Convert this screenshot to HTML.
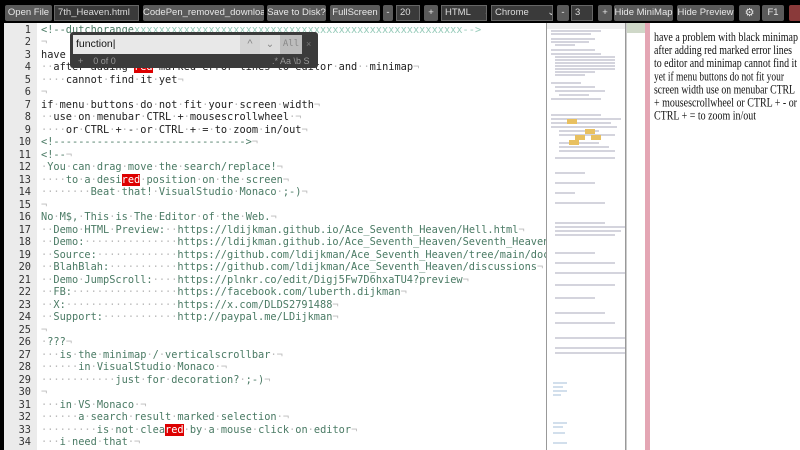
<!DOCTYPE html>
<html><head><meta charset="utf-8"><style>
*{margin:0;padding:0;box-sizing:border-box}
body{width:800px;height:450px;overflow:hidden;background:#000;font-family:"Liberation Sans",sans-serif;position:relative}
.bar{position:absolute;left:0;top:0;width:800px;height:23px;background:#000}
.b{position:absolute;top:5px;height:16px;background:#5a5a5a;color:#e8e8e8;font-size:9.5px;line-height:16px;text-align:center;border-radius:2px;white-space:nowrap;overflow:hidden}
.in{position:absolute;top:5px;height:16px;background:#3a3a3a;border:1px solid #666;color:#ddd;font-size:9.5px;line-height:14px;padding-left:3px;white-space:nowrap;overflow:hidden}
.gut{position:absolute;left:4px;top:23px;width:33px;height:427px;background:#ebebeb}
.ed{position:absolute;left:37px;top:23px;width:509px;height:427px;background:#fff;overflow:hidden}
pre{position:absolute;font-family:"DejaVu Sans Mono",monospace;font-size:10.3px;line-height:12.48px;white-space:pre}
.nums{left:4px;top:24px;width:27px;text-align:right;color:#333}
.code{left:41px;top:24px;color:#4b7b65;width:505px;overflow:hidden}
.k{color:#222}.d{color:#bbb}.r{background:#d00;color:#fff}
.mm{position:absolute;left:546px;top:23px;width:80px;height:427px;background:#fff;border-left:1px solid #999;border-right:1px solid #999}
.sb{position:absolute;left:626px;top:23px;width:19px;height:427px;background:#fff;border-left:1px solid #ccc}
.pk{position:absolute;left:645px;top:23px;width:5px;height:427px;background:#e4a6b4}
.pv{position:absolute;left:650px;top:23px;width:150px;height:427px;background:#fff}
.sr{position:absolute;left:70px;top:32px;width:248px;height:36px;background:#3b3b3b;border-radius:3px}
</style></head><body>
<div class="bar"></div>
<div class="b" style="left:5px;width:47px">Open File</div>
<div class="in" style="left:54px;width:85px">7th_Heaven.html</div>
<div class="b" style="left:143px;width:121px">CodePen_removed_download</div>
<div class="b" style="left:267px;width:59px">Save to Disk?</div>
<div class="b" style="left:330px;width:50px">FullScreen</div>
<div class="b" style="left:383px;width:10px">-</div>
<div class="in" style="left:396px;width:24px">20</div>
<div class="b" style="left:424px;width:14px">+</div>
<div class="in" style="left:441px;width:46px">HTML &nbsp;&nbsp;&nbsp;&nbsp;⌄</div>
<div class="in" style="left:491px;width:62px">Chrome &nbsp;&nbsp;&nbsp;&nbsp;&nbsp;&nbsp;⌄</div>
<div class="b" style="left:557px;width:12px">-</div>
<div class="in" style="left:571px;width:22px">3</div>
<div class="b" style="left:598px;width:14px">+</div>
<div class="b" style="left:614px;width:59px">Hide MiniMap</div>
<div class="b" style="left:677px;width:57px">Hide Preview</div>
<div class="b" style="left:739px;width:21px;font-size:11px">⚙</div>
<div class="b" style="left:762px;width:22px">F1</div>
<div class="b" style="left:789px;width:14px;background:#8a3a3a"></div>
<div class="gut"></div>
<div class="ed"></div>
<pre class="nums">1
2
3
4
5
6
7
8
9
10
11
12
13
14
15
16
17
18
19
20
21
22
23
24
25
26
27
28
29
30
31
32
33
34</pre>
<pre class="code">&lt;!--dutchorange<span style="color:#9cb">xxxxxxxxxxxxxxxxxxxxxxxxxxxxxxxxxxxxxxxxxxxxxxxxxxxxx--&gt;</span>
<span class="d">¬</span>
<span class="k">have a problem with black minimap</span>
<span class="k"><span class="d">··</span>after<span class="d">·</span>adding<span class="d">·</span><span class="r">red</span><span class="d">·</span>marked<span class="d">·</span>error<span class="d">·</span>lines<span class="d">·</span>to<span class="d">·</span>editor<span class="d">·</span>and<span class="d">··</span>minimap<span class="d">¬</span></span>
<span class="k"><span class="d">····</span>cannot<span class="d">·</span>find<span class="d">·</span>it<span class="d">·</span>yet<span class="d">¬</span></span>
<span class="d">¬</span>
<span class="k">if<span class="d">·</span>menu<span class="d">·</span>buttons<span class="d">·</span>do<span class="d">·</span>not<span class="d">·</span>fit<span class="d">·</span>your<span class="d">·</span>screen<span class="d">·</span>width<span class="d">¬</span></span>
<span class="k"><span class="d">··</span>use<span class="d">·</span>on<span class="d">·</span>menubar<span class="d">·</span>CTRL<span class="d">·</span>+<span class="d">·</span>mousescrollwheel<span class="d">·¬</span></span>
<span class="k"><span class="d">····</span>or<span class="d">·</span>CTRL<span class="d">·</span>+<span class="d">·</span>-<span class="d">·</span>or<span class="d">·</span>CTRL<span class="d">·</span>+<span class="d">·</span>=<span class="d">·</span>to<span class="d">·</span>zoom<span class="d">·</span>in/out<span class="d">¬</span></span>
&lt;!-------------------------------&gt;<span class="d">¬</span>
&lt;!--<span class="d">¬</span>
<span class="d">·</span>You<span class="d">·</span>can<span class="d">·</span>drag<span class="d">·</span>move<span class="d">·</span>the<span class="d">·</span>search/replace!<span class="d">¬</span>
<span class="d">····</span>to<span class="d">·</span>a<span class="d">·</span>desi<span class="r">red</span><span class="d">·</span>position<span class="d">·</span>on<span class="d">·</span>the<span class="d">·</span>screen<span class="d">¬</span>
<span class="d">········</span>Beat<span class="d">·</span>that!<span class="d">·</span>VisualStudio<span class="d">·</span>Monaco<span class="d">·</span>;-)<span class="d">¬</span>
<span class="d">¬</span>
No<span class="d">·</span>M$,<span class="d">·</span>This<span class="d">·</span>is<span class="d">·</span>The<span class="d">·</span>Editor<span class="d">·</span>of<span class="d">·</span>the<span class="d">·</span>Web.<span class="d">¬</span>
<span class="d">··</span>Demo<span class="d">·</span>HTML<span class="d">·</span>Preview:<span class="d">··</span>https://ldijkman.github.io/Ace_Seventh_Heaven/Hell.html<span class="d">¬</span>
<span class="d">··</span>Demo:<span class="d">···············</span>https://ldijkman.github.io/Ace_Seventh_Heaven/Seventh_Heaven.html
<span class="d">··</span>Source:<span class="d">·············</span>https://github.com/ldijkman/Ace_Seventh_Heaven/tree/main/docs
<span class="d">··</span>BlahBlah:<span class="d">···········</span>https://github.com/ldijkman/Ace_Seventh_Heaven/discussions<span class="d">¬</span>
<span class="d">··</span>Demo<span class="d">·</span>JumpScroll:<span class="d">····</span>https://plnkr.co/edit/Digj5Fw7D6hxaTU4?preview<span class="d">¬</span>
<span class="d">··</span>FB:<span class="d">·················</span>https://facebook.com/luberth.dijkman<span class="d">¬</span>
<span class="d">··</span>X:<span class="d">··················</span>https://x.com/DLDS2791488<span class="d">¬</span>
<span class="d">··</span>Support:<span class="d">············</span>http://paypal.me/LDijkman<span class="d">¬</span>
<span class="d">¬</span>
<span class="d">·</span>???<span class="d">¬</span>
<span class="d">···</span>is<span class="d">·</span>the<span class="d">·</span>minimap<span class="d">·</span>/<span class="d">·</span>verticalscrollbar<span class="d">·¬</span>
<span class="d">······</span>in<span class="d">·</span>VisualStudio<span class="d">·</span>Monaco<span class="d">·¬</span>
<span class="d">············</span>just<span class="d">·</span>for<span class="d">·</span>decoration?<span class="d">·</span>;-)<span class="d">¬</span>
<span class="d">¬</span>
<span class="d">···</span>in<span class="d">·</span>VS<span class="d">·</span>Monaco<span class="d">·¬</span>
<span class="d">······</span>a<span class="d">·</span>search<span class="d">·</span>result<span class="d">·</span>marked<span class="d">·</span>selection<span class="d">·¬</span>
<span class="d">·········</span>is<span class="d">·</span>not<span class="d">·</span>clea<span class="r">red</span><span class="d">·</span>by<span class="d">·</span>a<span class="d">·</span>mouse<span class="d">·</span>click<span class="d">·</span>on<span class="d">·</span>editor<span class="d">¬</span>
<span class="d">···</span>i<span class="d">·</span>need<span class="d">·</span>that<span class="d">·¬</span></pre>
<div class="mm">
<svg width="78" height="427" style="position:absolute;left:0;top:0">
<g stroke="#aab" stroke-width="0.9">
<path d="M4 4h30M4 8h50M4 11h40M4 16h44M4 19h38M8 22h20M4 27h44M4 31h50M8 34h60M8 37h60M8 40h60M8 43h60M8 46h60M8 49h40M8 52h30M4 60h30M8 64h40M8 68h50M12 72h30M4 76h50M4 92h50M4 96h70M4 100h60M4 104h66M12 108h40M12 112h56M12 120h40M12 124h50M12 128h56M8 135h60M8 150h30M8 160h40M8 170h20M8 180h50M8 200h50M8 204h70M8 208h66M8 212h60M8 230h40M8 240h60M8 250h70M8 262h60M8 275h40M8 290h50M8 300h60M8 315h70M8 325h70M8 330h70"/>
</g>
<g fill="#e8c060"><rect x="20" y="96" width="10" height="5"/><rect x="38" y="106" width="10" height="5"/><rect x="28" y="112" width="10" height="5"/><rect x="44" y="112" width="10" height="5"/><rect x="22" y="117" width="10" height="5"/></g>
<g stroke="#8ac" stroke-width="0.8"><path d="M6 360h14M6 364h10M6 368h14M6 372h8M6 400h14M6 404h10M6 410h12M6 420h14"/></g>
<rect x="0" y="0" width="78" height="6" fill="#eee"/>
</svg></div>
<div class="sb"><div style="height:10px;background:#cfd8c8"></div></div>
<div class="pk"></div>
<div class="pv">
<svg width="150" height="130" style="position:absolute;left:0;top:0" font-family="Liberation Serif, serif" font-size="13" fill="#111">
<text x="4" y="18" textLength="144" lengthAdjust="spacingAndGlyphs">have a problem with black minimap</text>
<text x="4" y="31.1" textLength="138" lengthAdjust="spacingAndGlyphs">after adding red marked error lines</text>
<text x="4" y="44.2" textLength="143" lengthAdjust="spacingAndGlyphs">to editor and minimap cannot find it</text>
<text x="4" y="57.3" textLength="130" lengthAdjust="spacingAndGlyphs">yet if menu buttons do not fit your</text>
<text x="4" y="70.4" textLength="141" lengthAdjust="spacingAndGlyphs">screen width use on menubar CTRL</text>
<text x="4" y="83.5" textLength="143" lengthAdjust="spacingAndGlyphs">+ mousescrollwheel or CTRL + - or</text>
<text x="4" y="96.6" textLength="102" lengthAdjust="spacingAndGlyphs">CTRL + = to zoom in/out</text>
</svg></div>
<div class="sr">
<div style="position:absolute;left:3px;top:3px;width:167px;height:19px;background:#e8e8e8;font-size:10.5px;line-height:19px;padding-left:3px;color:#111">function|</div>
<div style="position:absolute;left:170px;top:3px;width:20px;height:19px;background:#d4d4d4;color:#888;text-align:center;font-size:11px;line-height:19px">^</div>
<div style="position:absolute;left:190px;top:3px;width:20px;height:19px;background:#dcdcdc;color:#888;text-align:center;font-size:10px;line-height:19px">⌄</div>
<div style="position:absolute;left:210px;top:3px;width:22px;height:19px;background:#bdbdbd;color:#888;text-align:center;font-size:9px;line-height:19px;font-family:'DejaVu Sans Mono',monospace">All</div>
<div style="position:absolute;left:236px;top:3px;color:#777;font-size:9px;line-height:19px">×</div>
<div style="position:absolute;left:8px;top:23px;color:#999;font-size:9px;line-height:12px">+ &nbsp;&nbsp;&nbsp;0 of 0</div>
<div style="position:absolute;left:202px;top:23px;color:#999;font-size:9px;line-height:12px">.* Aa \b S</div>
</div>
</body></html>
